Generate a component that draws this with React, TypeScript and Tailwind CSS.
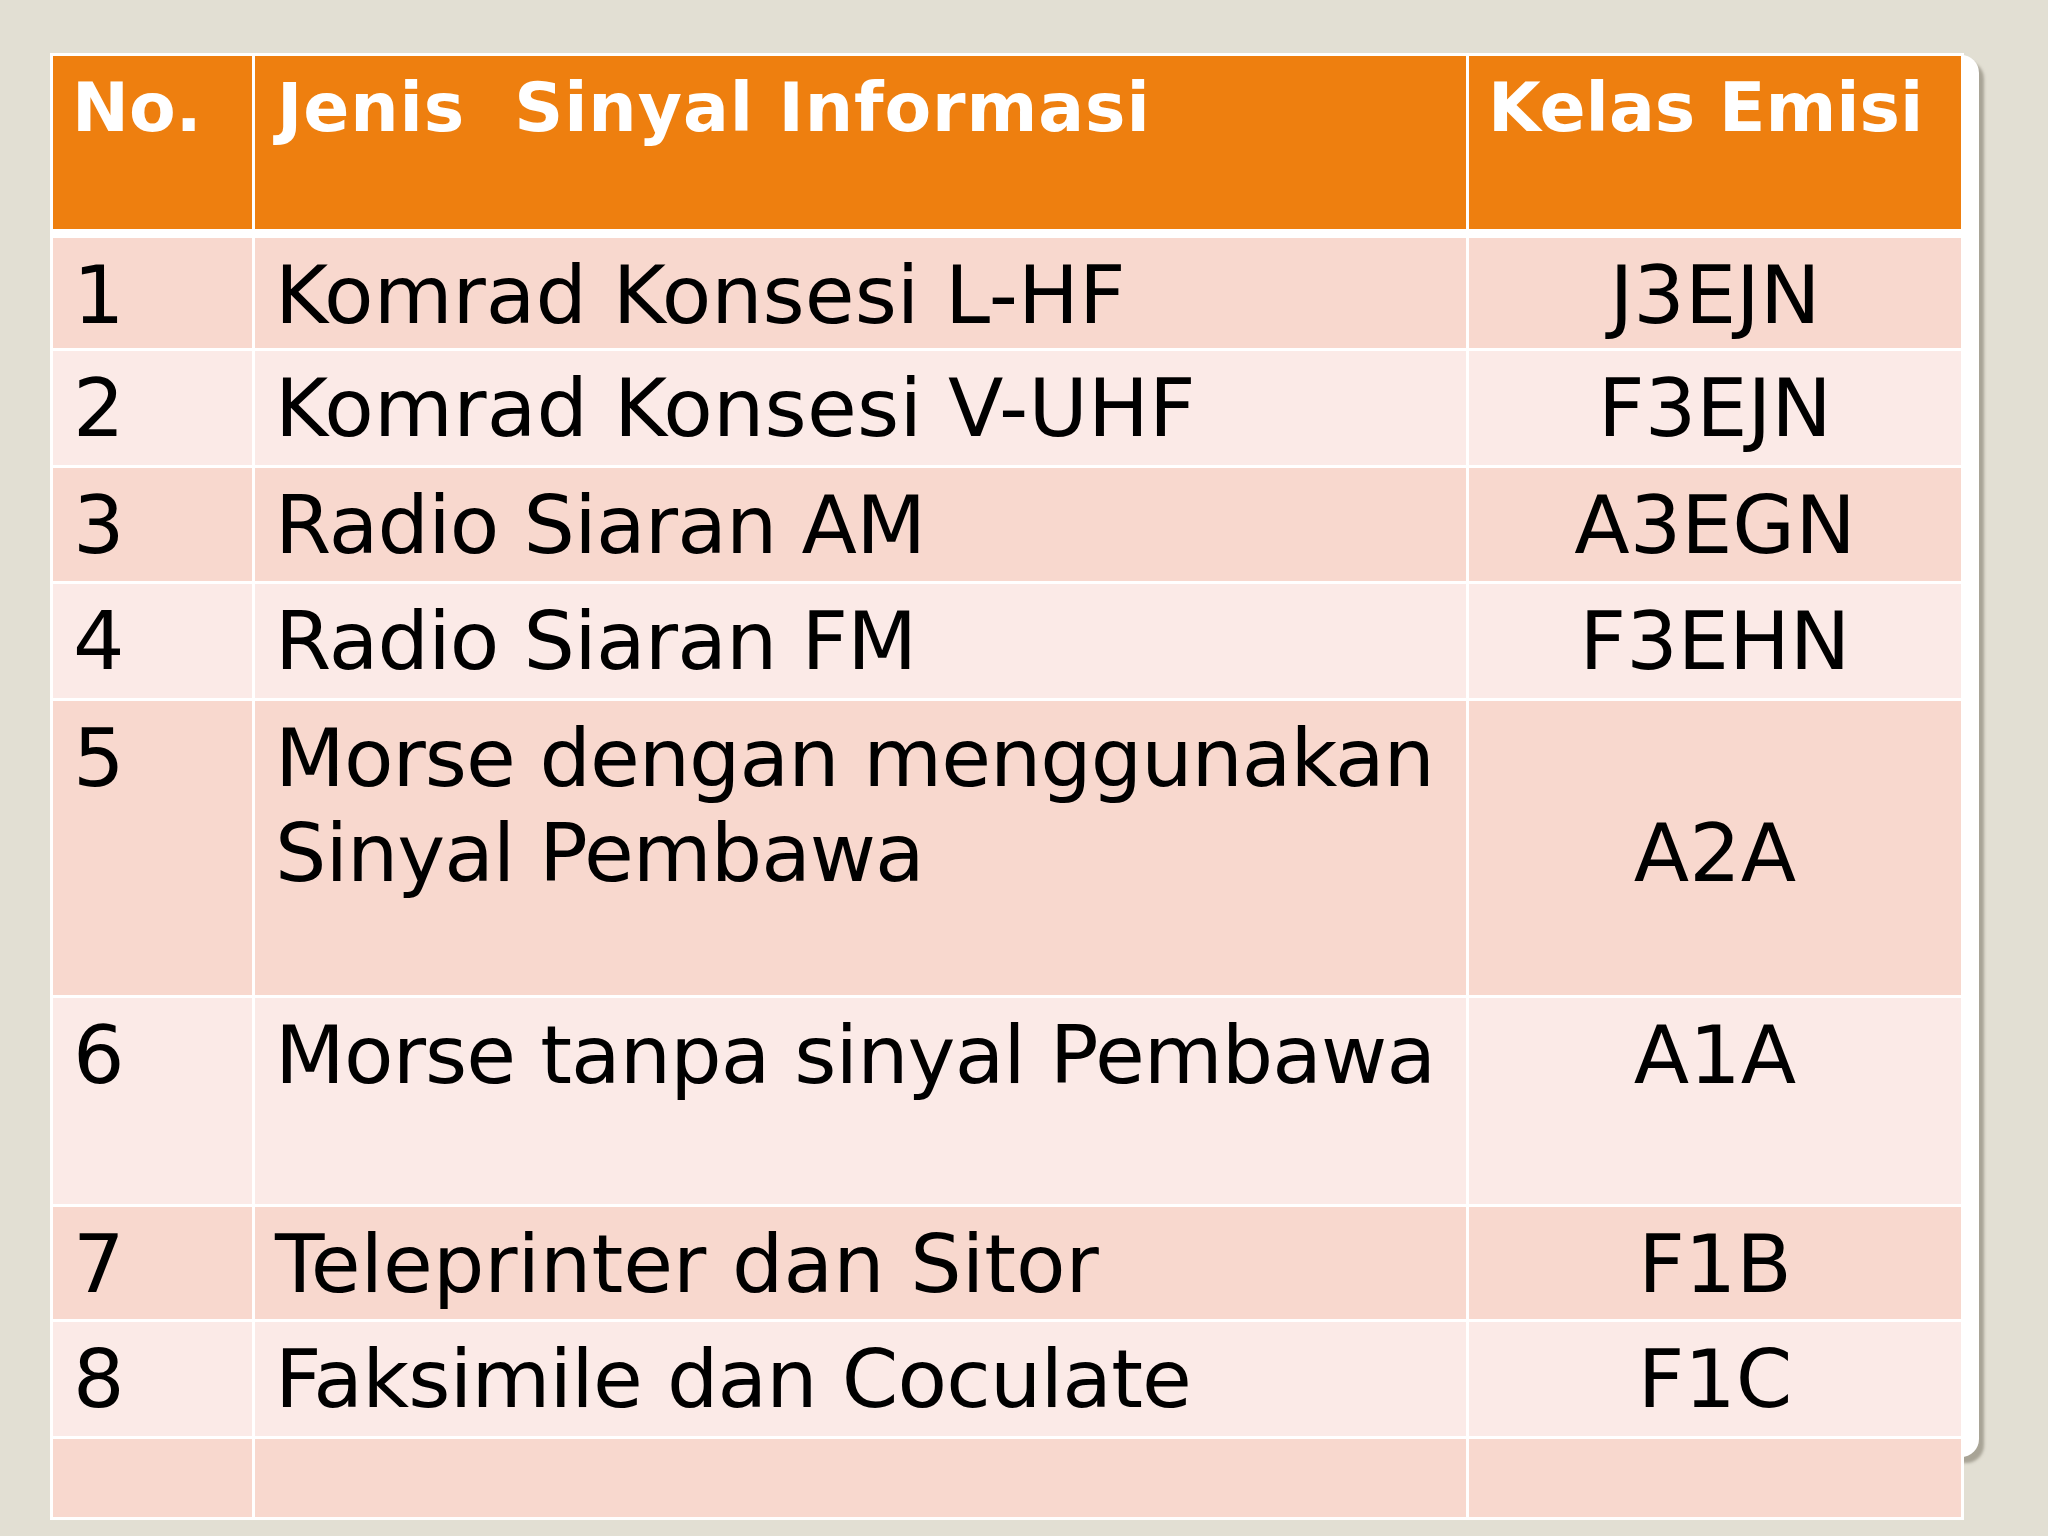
import React from "react";

type Row = { no: string; jenis: React.ReactNode; kelas: React.ReactNode; h: string; dark: boolean; tr: string };

const rows: Row[] = [
  { no: "1", jenis: "Komrad Konsesi L-HF", kelas: "J3EJN", h: "h-[110px]", dark: true, tr: "tracking-[0px]" },
  { no: "2", jenis: "Komrad Konsesi V-UHF", kelas: "F3EJN", h: "h-[114px]", dark: false, tr: "tracking-[0.2px]" },
  { no: "3", jenis: "Radio Siaran AM", kelas: "A3EGN", h: "h-[113px]", dark: true, tr: "tracking-[-0.8px]" },
  { no: "4", jenis: "Radio Siaran FM", kelas: "F3EHN", h: "h-[114px]", dark: false, tr: "tracking-[-0.8px]" },
  {
    no: "5",
    jenis: (
      <>
        Morse dengan menggunakan
        <br />
        Sinyal Pembawa
      </>
    ),
    kelas: (
      <>
        <br />
        A2A
      </>
    ),
    h: "h-[294px]",
    dark: true,
    tr: "tracking-[-1px]",
  },
  { no: "6", jenis: "Morse tanpa sinyal Pembawa", kelas: "A1A", h: "h-[206px]", dark: false, tr: "tracking-[-0.9px]" },
  { no: "7", jenis: "Teleprinter dan Sitor", kelas: "F1B", h: "h-[112px]", dark: true, tr: "tracking-[0px]" },
  { no: "8", jenis: "Faksimile dan Coculate", kelas: "F1C", h: "h-[114px]", dark: false, tr: "tracking-[-0.8px]" },
  { no: "", jenis: "", kelas: "", h: "h-[78px]", dark: true, tr: "tracking-[0px]" },
];

export default function App() {
  return (
    <div
      className="relative w-[2048px] h-[1536px] bg-[#e2dfd3] overflow-hidden"
      style={{ fontFamily: "'DejaVu Sans', Verdana, sans-serif" }}
    >
      {/* white card behind table */}
      <div className="absolute left-[60px] top-[55px] w-[1919px] h-[1402px] bg-white rounded-[18px] shadow-[5px_6px_3px_rgba(120,115,100,0.55)]" />

      <div className="relative ml-[50px] pt-[53px] w-[1914px]">
        <div className="flex flex-col gap-[3px] bg-white p-[3px]">
          {/* header */}
          <div className="grid grid-cols-[199px_1211px_492px] gap-[3px] h-[173px] mb-[6px]">
            <div className="bg-[#ee7f0f] pl-[19px] pt-[12px] text-white font-bold text-[68px] leading-[80px]">No.</div>
            <div className="bg-[#ee7f0f] pl-[22px] pt-[12px] text-white font-bold text-[68px] leading-[80px] whitespace-pre tracking-[0.9px]">
              {"Jenis  Sinyal Informasi"}
            </div>
            <div className="bg-[#ee7f0f] pl-[19px] pt-[12px] text-white font-bold text-[68px] leading-[80px] whitespace-pre">
              Kelas Emisi
            </div>
          </div>
          {rows.map((r, i) => {
            const bg = r.dark ? "bg-[#f8d8ce]" : "bg-[#fbeae7]";
            return (
              <div key={i} className={`grid grid-cols-[199px_1211px_492px] gap-[3px] ${r.h}`}>
                <div className={`${bg} pl-[20px] pt-[10px] text-black text-[81px] leading-[95px]`}>{r.no}</div>
                <div className={`${bg} pl-[20px] pt-[10px] text-black text-[81px] leading-[95px] whitespace-nowrap ${r.tr}`}>
                  {r.jenis}
                </div>
                <div className={`${bg} pt-[10px] text-center text-black text-[81px] leading-[95px] whitespace-nowrap`}>
                  {r.kelas}
                </div>
              </div>
            );
          })}
        </div>
      </div>
    </div>
  );
}
